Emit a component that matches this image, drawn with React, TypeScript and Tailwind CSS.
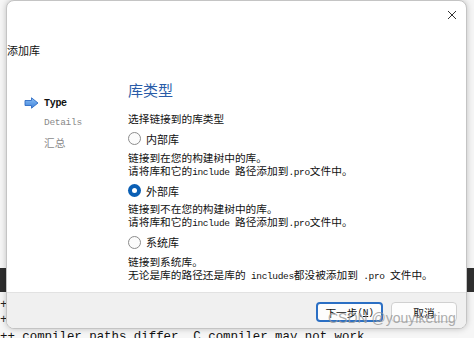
import React from "react";

const CJK = "font-['Noto_Sans_CJK_SC',sans-serif]";
const MONO = "font-['Liberation_Mono',monospace]";

function M({ children, className = "" }: { children: React.ReactNode; className?: string }) {
  return (
    <span className={`${MONO} text-[9.5px] tracking-[-0.35px] whitespace-pre ${className}`}>{children}</span>
  );
}

function Radio({ checked, label }: { checked?: boolean; label: string }) {
  return (
    <div className="flex items-center h-[16px] gap-[5px]">
      {checked ? (
        <div className="w-[13px] h-[13px] rounded-full bg-[#0a5fb4] flex items-center justify-center">
          <div className="w-[5px] h-[5px] rounded-full bg-white" />
        </div>
      ) : (
        <div className="w-[13px] h-[13px] rounded-full border border-[#8c8c8c] bg-[#fbfbfb]" />
      )}
      <span className="text-[11px] leading-[16px] text-[#111]">{label}</span>
    </div>
  );
}

function Arrow() {
  return (
    <svg width="15" height="12" viewBox="0 0 15 12">
      <defs>
        <linearGradient id="ag" x1="0" y1="0" x2="0" y2="1">
          <stop offset="0" stopColor="#8cc0f4" />
          <stop offset="1" stopColor="#3d82dc" />
        </linearGradient>
      </defs>
      <path
        d="M1 3.5 H7.5 V0.8 L14 6 L7.5 11.2 V8.5 H1 Z"
        fill="url(#ag)"
        stroke="#2f6cc4"
        strokeWidth="0.9"
        strokeLinejoin="round"
      />
    </svg>
  );
}

export default function App() {
  return (
    <div className={`w-[474px] h-[338px] overflow-hidden bg-[#f6f6f6] relative ${CJK}`}>
      <div className="flex h-[329px]">
        {/* left strip (behind window) */}
        <div className="w-[6px] shrink-0 flex flex-col overflow-hidden">
          <div className="h-[268px] shrink-0" />
          <div className="h-[24px] shrink-0 bg-[#2e2e2e]" />
          <div className={`${MONO} text-[12px] leading-[15px] text-[#222] mt-[6px] whitespace-pre`}>
            <div>++</div>
            <div>++</div>
          </div>
        </div>

        {/* dialog */}
        <div className="w-[461px] shrink-0 h-[329px] bg-white border border-[#c4c4c4] rounded-[8px] flex flex-col overflow-hidden shadow-[0_0_6px_rgba(0,0,0,0.22)] text-[#111]">
          {/* title bar */}
          <div className="h-[79px] shrink-0 flex flex-col">
            <div className="h-[27px] flex items-center justify-end pr-[9px]">
              <svg width="10" height="10" viewBox="0 0 10 10">
                <path d="M1 1 L9 9 M9 1 L1 9" stroke="#333" strokeWidth="1" />
              </svg>
            </div>
            <div className="mt-[16px] text-[11px] leading-[13px] text-[#111]">添加库</div>
          </div>

          {/* body */}
          <div className="flex-1 flex">
            <div className="w-[121px] shrink-0 pl-[17px] pt-[13px] flex flex-col">
              <div className="h-[20px] flex items-center gap-[5px]">
                <div className="w-[15px] flex items-center"><Arrow /></div>
                <span className={`${MONO} text-[10px] tracking-[-0.3px] font-bold text-[#111]`}>Type</span>
              </div>
              <div className="h-[20px] flex items-center gap-[5px]">
                <div className="w-[15px]" />
                <span className={`${MONO} text-[9.5px] tracking-[-0.3px] text-[#8a8a8a]`}>Details</span>
              </div>
              <div className="h-[20px] flex items-center gap-[5px]">
                <div className="w-[15px]" />
                <span className="text-[10.7px] text-[#8a8a8a]">汇总</span>
              </div>
            </div>

            <div className="flex-1 flex flex-col">
              <div className="text-[15px] leading-[20px] text-[#2a5ca8]">库类型</div>
              <div className="mt-[11.5px] text-[10.7px] leading-[13px]">选择链接到的库类型</div>
              <div className="mt-[6px]"><Radio label="内部库" /></div>
              <div className="mt-[4.5px] text-[10.7px] leading-[13px]">
                <div>链接到在您的构建树中的库。</div>
                <div>请将库和它的<M>include </M>路径添加到<M>.pro</M>文件中。</div>
              </div>
              <div className="mt-[3.5px]"><Radio checked label="外部库" /></div>
              <div className="mt-[3.5px] text-[10.7px] leading-[13px]">
                <div>链接到不在您的构建树中的库。</div>
                <div>请将库和它的<M>include </M>路径添加到<M>.pro</M>文件中。</div>
              </div>
              <div className="mt-[4px]"><Radio label="系统库" /></div>
              <div className="mt-[5px] text-[10.7px] leading-[13px]">
                <div>链接到系统库。</div>
                <div>无论是库的路径还是库的<M> includes</M>都没被添加到<M> .pro </M>文件中。</div>
              </div>
            </div>
          </div>

          {/* footer */}
          <div className="h-[36px] shrink-0 bg-[#f0f0f0] border-t border-[#e2e2e2] flex justify-end items-start pt-[9px] pr-[9px] gap-[8px]">
            <div className="w-[67px] h-[20px] rounded-[4px] border-2 border-[#2b6fc4] bg-[#fdfdfd] flex items-center justify-center text-[10.7px] leading-[13px]">
              下一步<M>(<span className="underline">N</span>)</M>
            </div>
            <div className="w-[66px] h-[20px] rounded-[4px] border border-[#d0d0d0] bg-[#fdfdfd] flex items-center justify-center text-[10.7px] leading-[13px]">
              取消
            </div>
          </div>
        </div>

        {/* right strip */}
        <div className="flex-1 flex flex-col">
          <div className="h-[268px] shrink-0" />
          <div className="h-[24px] shrink-0 bg-[#2e2e2e]" />
        </div>
      </div>

      <div className={`${MONO} mt-[1px] text-[12.4px] leading-[14px] text-[#111] whitespace-pre`}>
        ++ compiler paths differ. C compiler may not work
      </div>

      {/* watermark */}
      <div className="absolute left-[328px] top-[311px] font-['Liberation_Sans',Arial,sans-serif] text-[14px] leading-[15px] text-[#999] opacity-80 whitespace-pre">
        CSDN @youyiketing
      </div>
    </div>
  );
}
